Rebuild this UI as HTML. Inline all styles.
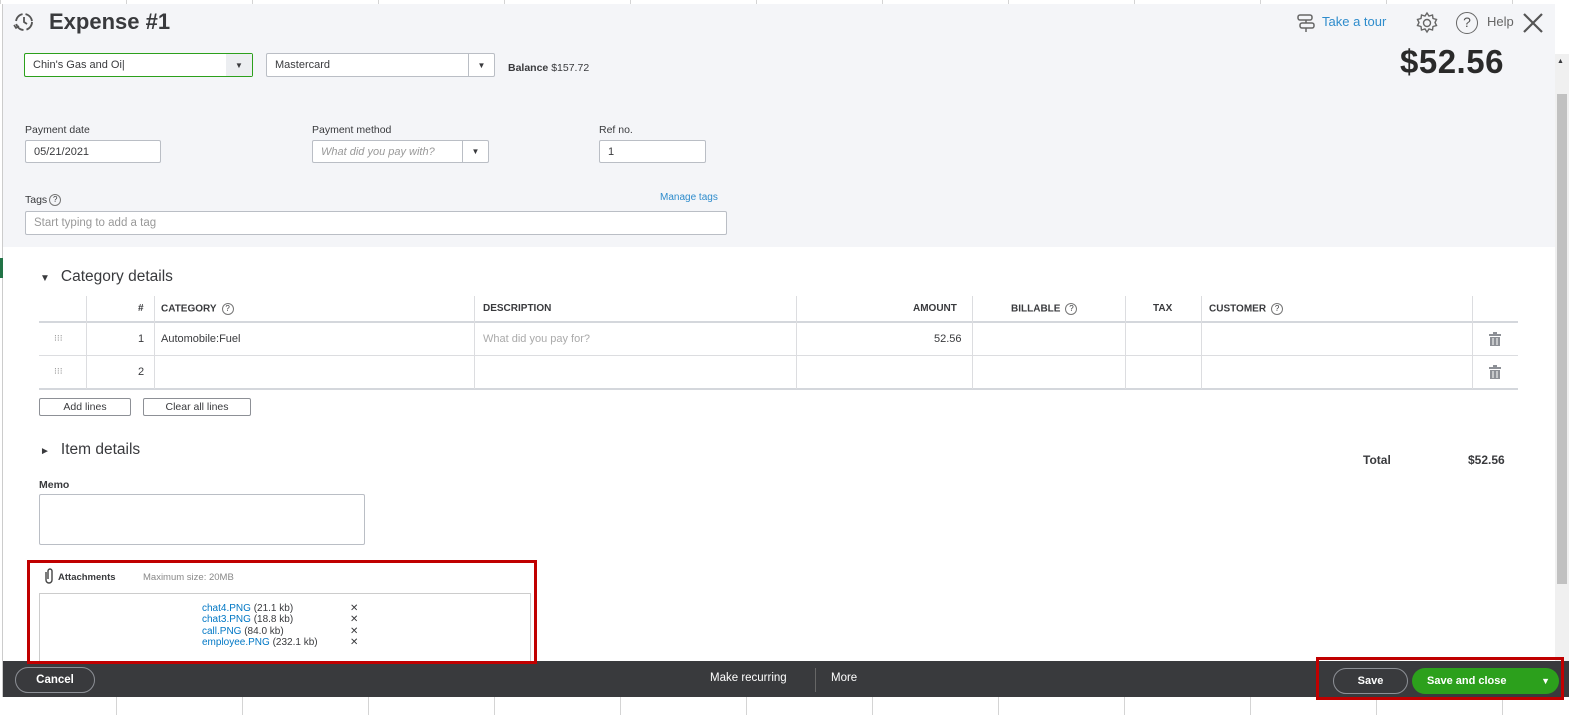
<!DOCTYPE html>
<html><head><meta charset="utf-8"><style>
*{box-sizing:border-box;margin:0;padding:0}
body{width:1593px;height:715px;overflow:hidden;background:#fff;font-family:"Liberation Sans",sans-serif;color:#393a3d;position:relative}
.a{position:absolute}
.grid{background-image:linear-gradient(90deg,#d4d4d4 1px,transparent 1px);background-size:126px 100%}
.in{position:absolute;background:#fff;border:1px solid #babec5;border-radius:2px;font-size:11px;padding-left:8px;display:flex;align-items:center}
.lbl{position:absolute;font-size:10.5px;color:#393a3d}
.dd{position:absolute;top:0;right:0;bottom:0;width:26px;border-left:1px solid #babec5;display:flex;align-items:center;justify-content:center;font-size:8px}
.th{position:absolute;font-size:10px;font-weight:bold;top:303px}
.vl{position:absolute;width:1px;background:#dcdde0}
.q{display:inline-block;width:12px;height:12px;border:1px solid #777;border-radius:50%;font-size:8px;text-align:center;line-height:10px;font-weight:normal;margin-left:5px;vertical-align:middle}
.btn{position:absolute;border:1px solid #8d9096;border-radius:2px;font-size:10.5px;display:flex;align-items:center;justify-content:center;background:#fff}
.lk{color:#0077c5}
</style></head><body>
<div class="a grid" style="left:0;top:0;width:1593px;height:4px"></div>
<div class="a grid" style="left:0;top:697px;width:1593px;height:18px;background-position:-10px 0"></div>
<div class="a" style="left:0;top:4px;width:3px;height:693px;background:#fff;border-right:1px solid #ccc"></div>
<div class="a" style="left:0;top:258px;width:3px;height:20px;background:#217346"></div>
<div class="a" style="left:3px;top:4px;width:1552px;height:243px;background:#f4f5f8"></div>
<div class="a" style="left:3px;top:247px;width:1552px;height:414px;background:#fff"></div>
<div class="a" style="left:1555px;top:54px;width:14px;height:607px;background:#f0f0f0"></div>
<div class="a" style="left:1557px;top:94px;width:10px;height:490px;background:#c1c1c1"></div>
<div class="a" style="left:1557px;top:58px;font-size:7px">▲</div>
<svg class="a" style="left:12px;top:11px" width="24" height="22" viewBox="0 0 24 22"><circle cx="12" cy="11" r="8" fill="none" stroke="#555" stroke-width="1.8" stroke-dasharray="10 3"/><path d="M12 6v5l3 2" stroke="#555" stroke-width="1.8" fill="none"/><path d="M2 14l2 3 3-2" stroke="#555" stroke-width="1.6" fill="none"/></svg>
<div class="a" style="left:49px;top:9px;font-size:22px;font-weight:bold">Expense #1</div>
<svg class="a" style="left:1296px;top:13px" width="20" height="20" viewBox="0 0 20 20" fill="none" stroke="#666" stroke-width="1.5"><rect x="2" y="2" width="14" height="5" rx="2"/><rect x="4" y="10" width="14" height="5" rx="2"/><path d="M10 7v3M10 15v4"/></svg>
<div class="a lk" style="left:1322px;top:14px;font-size:13px;color:#2e8ccc">Take a tour</div>
<svg class="a" style="left:1415px;top:11px" width="24" height="24" viewBox="0 0 24 24" fill="none" stroke="#666" stroke-width="1.4"><circle cx="12" cy="12" r="3.5"/><path d="M12 2l2 3 3.5-1 .5 3.5 3.5 1-1.5 3 1.5 3-3.5 1-.5 3.5-3.5-1-2 3-2-3-3.5 1-.5-3.5-3.5-1 1.5-3-1.5-3 3.5-1 .5-3.5 3.5 1z"/></svg>
<div class="a" style="left:1456px;top:12px;width:22px;height:22px;border:1.6px solid #666;border-radius:50%;font-size:14px;text-align:center;line-height:19px;color:#555">?</div>
<div class="a" style="left:1487px;top:14px;font-size:13px;color:#666">Help</div>
<svg class="a" style="left:1522px;top:12px" width="22" height="22" viewBox="0 0 22 22" stroke="#555" stroke-width="2.2"><path d="M2 2l18 18M20 2L2 20"/></svg>
<div class="in" style="left:24px;top:53px;width:229px;height:24px;border-color:#2ca01c">Chin's Gas and Oi|<div class="dd" style="border-left:0;background:#eceef1">▼</div></div>
<div class="in" style="left:266px;top:53px;width:229px;height:24px">Mastercard<div class="dd">▼</div></div>
<div class="a" style="left:508px;top:62px;font-size:10.5px"><b>Balance</b> $157.72</div>
<div class="a" style="left:1400px;top:43px;font-size:33px;font-weight:bold;color:#2a2a2a;letter-spacing:0.5px">$52.56</div>
<div class="lbl" style="left:25px;top:124px">Payment date</div>
<div class="in" style="left:25px;top:140px;width:136px;height:23px">05/21/2021</div>
<div class="lbl" style="left:312px;top:124px">Payment method</div>
<div class="in" style="left:312px;top:140px;width:177px;height:23px;color:#999;font-style:italic">What did you pay with?<div class="dd" style="width:26px;font-style:normal;color:#393a3d">▼</div></div>
<div class="lbl" style="left:599px;top:124px">Ref no.</div>
<div class="in" style="left:599px;top:140px;width:107px;height:23px">1</div>
<div class="lbl" style="left:25px;top:194px">Tags<span class="q" style="margin-left:2px">?</span></div>
<div class="a lk" style="left:660px;top:192px;font-size:10px;color:#2e8ccc">Manage tags</div>
<div class="in" style="left:25px;top:211px;width:702px;height:24px;color:#999;font-size:11.5px">Start typing to add a tag</div>
<div class="a" style="left:40px;top:268px;font-size:15.5px"><span style="font-size:10px;margin-right:11px">▼</span>Category details</div>
<div class="th" style="left:138px">#</div>
<div class="th" style="left:161px">CATEGORY<span class="q">?</span></div>
<div class="th" style="left:483px">DESCRIPTION</div>
<div class="th" style="left:913px">AMOUNT</div>
<div class="th" style="left:1011px">BILLABLE<span class="q">?</span></div>
<div class="th" style="left:1153px">TAX</div>
<div class="th" style="left:1209px">CUSTOMER<span class="q">?</span></div>
<div class="a" style="left:39px;top:321px;width:1479px;height:2px;background:#d4d7dc"></div>
<div class="a" style="left:39px;top:355px;width:1479px;height:1px;background:#dcdde0"></div>
<div class="a" style="left:39px;top:388px;width:1479px;height:2px;background:#d4d7dc"></div>
<div class="vl" style="left:86px;top:296px;height:93px"></div>
<div class="vl" style="left:154px;top:296px;height:93px"></div>
<div class="vl" style="left:474px;top:296px;height:93px"></div>
<div class="vl" style="left:796px;top:296px;height:93px"></div>
<div class="vl" style="left:972px;top:296px;height:93px"></div>
<div class="vl" style="left:1125px;top:296px;height:93px"></div>
<div class="vl" style="left:1201px;top:296px;height:93px"></div>
<div class="vl" style="left:1472px;top:296px;height:93px"></div>
<div class="a" style="left:54px;top:333px;font-size:9px;color:#888">⁝⁝⁝</div>
<div class="a" style="left:54px;top:366px;font-size:9px;color:#888">⁝⁝⁝</div>
<div class="a" style="left:138px;top:333px;font-size:11px">1</div>
<div class="a" style="left:138px;top:366px;font-size:11px">2</div>
<div class="a" style="left:161px;top:333px;font-size:11px">Automobile:Fuel</div>
<div class="a" style="left:483px;top:333px;font-size:11px;color:#aaa">What did you pay for?</div>
<div class="a" style="left:934px;top:333px;font-size:11px">52.56</div>
<svg class="a" style="left:1489px;top:332px" width="12" height="14" viewBox="0 0 12 14" fill="#8d9096"><rect x="0" y="2" width="12" height="2"/><rect x="4" y="0" width="4" height="2"/><rect x="1" y="5" width="10" height="9"/><rect x="3.5" y="6" width="1" height="7" fill="#fff"/><rect x="7.5" y="6" width="1" height="7" fill="#fff"/></svg>
<svg class="a" style="left:1489px;top:365px" width="12" height="14" viewBox="0 0 12 14" fill="#8d9096"><rect x="0" y="2" width="12" height="2"/><rect x="4" y="0" width="4" height="2"/><rect x="1" y="5" width="10" height="9"/><rect x="3.5" y="6" width="1" height="7" fill="#fff"/><rect x="7.5" y="6" width="1" height="7" fill="#fff"/></svg>
<div class="btn" style="left:39px;top:398px;width:92px;height:18px">Add lines</div>
<div class="btn" style="left:143px;top:398px;width:108px;height:18px">Clear all lines</div>
<div class="a" style="left:40px;top:441px;font-size:15.5px"><span style="font-size:10px;margin-right:11px">►</span>Item details</div>
<div class="a" style="left:1363px;top:453px;font-size:12px;font-weight:bold">Total</div>
<div class="a" style="left:1468px;top:453px;font-size:12px;font-weight:bold">$52.56</div>
<div class="lbl" style="left:39px;top:479px;font-weight:bold">Memo</div>
<div class="a" style="left:39px;top:494px;width:326px;height:51px;border:1px solid #babec5;border-radius:2px"></div>
<div class="a" style="left:27px;top:560px;width:510px;height:104px;border:3px solid #c00000;z-index:3"></div>
<svg class="a" style="left:42px;top:568px" width="14" height="16" viewBox="0 0 14 16" fill="none" stroke="#444" stroke-width="1.4"><path d="M4 4v8a3 3 0 0 0 6 0V3a2 2 0 0 0-4 0v8"/></svg>
<div class="a" style="left:58px;top:572px;font-size:9.5px;font-weight:bold">Attachments</div>
<div class="a" style="left:143px;top:572px;font-size:9.5px;color:#888">Maximum size: 20MB</div>
<div class="a" style="left:39px;top:593px;width:492px;height:68px;border:1px solid #ccc;border-bottom:0"></div>
<div class="a" style="left:202px;top:603px;font-size:10px;line-height:11.3px">
<div><span class="lk">chat4.PNG</span> (21.1 kb)</div>
<div><span class="lk">chat3.PNG</span> (18.8 kb)</div>
<div><span class="lk">call.PNG</span> (84.0 kb)</div>
<div><span class="lk">employee.PNG</span> (232.1 kb)</div></div>
<div class="a" style="left:350px;top:603px;font-size:10px;line-height:11.3px">✕<br>✕<br>✕<br>✕</div>
<div class="a" style="left:3px;top:661px;width:1566px;height:36px;background:#393a3d"></div>
<div class="a" style="left:15px;top:667px;width:80px;height:26px;border:1px solid #8d9096;border-radius:14px;color:#fff;font-size:11.5px;font-weight:bold;text-align:center;line-height:24px">Cancel</div>
<div class="a" style="left:710px;top:672px;color:#fff;font-size:11.5px">Make recurring</div>
<div class="a" style="left:815px;top:668px;width:1px;height:24px;background:#666"></div>
<div class="a" style="left:831px;top:672px;color:#fff;font-size:11.5px">More</div>
<div class="a" style="left:1316px;top:657px;width:248px;height:43px;border:3px solid #c00000"></div>
<div class="a" style="left:1333px;top:668px;width:75px;height:26px;border:1px solid #8d9096;border-radius:14px;color:#fff;font-size:11px;font-weight:bold;text-align:center;line-height:24px">Save</div>
<div class="a" style="left:1412px;top:668px;width:147px;height:26px;background:#2ca01c;border-radius:14px;color:#fff;font-size:11px;font-weight:bold;line-height:26px;padding-left:15px">Save and close<span style="position:absolute;right:9px;font-size:9px">▼</span></div>
</body></html>
